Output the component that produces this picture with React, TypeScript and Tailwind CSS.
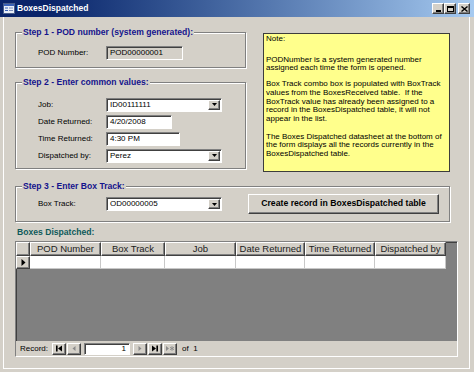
import React from "react";

const FONT = "font-['Liberation_Sans',Arial,sans-serif]";

// raised / sunken win9x style edges
const RAISED = "border border-t-white border-l-white border-b-[#404040] border-r-[#404040] shadow-[inset_-1px_-1px_0_#808080]";
const SUNKEN = "border border-t-[#808080] border-l-[#808080] border-b-white border-r-white shadow-[inset_1px_1px_0_#404040]";

function GroupBox({ title, className, children }: { title: string; className?: string; children?: React.ReactNode }) {
    return (
        <div className={`relative border border-[#808080] shadow-[1px_1px_0_#fff,inset_1px_1px_0_#fff] ${className ?? ""}`}>
            <span className="absolute left-[6px] top-[-6px] px-[1px] bg-[#d4d0c8] text-[8.6px] leading-[11px] font-bold text-[#14148c] whitespace-nowrap">
                {title}
            </span>
            {children}
        </div>
    );
}

function DropArrow() {
    return (
        <div className={`w-[12px] h-full bg-[#d4d0c8] ${RAISED} flex items-center justify-center`}>
            <svg width="5" height="3" viewBox="0 0 5 3">
                <polygon points="0,0 5,0 2.5,3" fill="#000" />
            </svg>
        </div>
    );
}

function Field({ value, width, combo, disabled }: { value: string; width: string; combo?: boolean; disabled?: boolean }) {
    return (
        <div className={`${width} h-[14px] ${SUNKEN} ${disabled ? "bg-[#d4d0c8]" : "bg-white"} flex items-stretch p-[1px]`}>
            <span className="flex-1 pl-[2px] text-[8px] leading-[10px] text-black whitespace-nowrap overflow-hidden">{value}</span>
            {combo && <DropArrow />}
        </div>
    );
}

function FieldRow({ label, children }: { label: string; children: React.ReactNode }) {
    return (
        <div className="flex items-center h-[15px]">
            <span className="w-[68px] text-[8px] text-black whitespace-nowrap">{label}</span>
            {children}
        </div>
    );
}

function NavButton({ kind }: { kind: "first" | "prev" | "next" | "last" | "new" }) {
    const on = "#000";
    const off = "#8a8a8a";
    return (
        <div className={`w-[14px] h-[12px] bg-[#d4d0c8] ${RAISED} flex items-center justify-center`}>
            <svg width="10" height="7" viewBox="0 0 10 7">
                {kind === "first" && (
                    <>
                        <rect x="2" y="0.5" width="1.6" height="6" fill={on} />
                        <polygon points="8,0.5 8,6.5 4,3.5" fill={on} />
                    </>
                )}
                {kind === "prev" && <polygon points="6.5,1 6.5,6 3.5,3.5" fill={off} />}
                {kind === "next" && <polygon points="3.5,1 3.5,6 6.5,3.5" fill={off} />}
                {kind === "last" && (
                    <>
                        <polygon points="2,0.5 2,6.5 6,3.5" fill={on} />
                        <rect x="6.4" y="0.5" width="1.6" height="6" fill={on} />
                    </>
                )}
                {kind === "new" && (
                    <>
                        <polygon points="1,1 1,6 4,3.5" fill={off} />
                        <path d="M7 1.2v4.6M5 2.3l4 2.4M9 2.3l-4 2.4" stroke={off} strokeWidth="0.9" />
                    </>
                )}
            </svg>
        </div>
    );
}

const columns = [
    { name: "POD Number", w: "w-[71px]" },
    { name: "Box Track", w: "w-[64px]" },
    { name: "Job", w: "w-[71px]" },
    { name: "Date Returned", w: "w-[69px]" },
    { name: "Time Returned", w: "w-[70px]" },
    { name: "Dispatched by", w: "w-[71px]" },
];

export default function App() {
    return (
        <div className={`w-[474px] h-[372px] bg-[#d4d0c8] overflow-hidden ${FONT}`}>
            {/* Title bar */}
            <div className="h-[17px] bg-linear-to-r from-[#0a246a] from-10% to-[#a6caf0] flex items-center pl-[3px] pr-[4px]">
                <svg width="12" height="11" viewBox="0 0 12 11" className="mr-[2px]">
                    <rect x="0.5" y="0.5" width="11" height="10" fill="#e8eef8" stroke="#4a5e8c" />
                    <rect x="1" y="1" width="10" height="2" fill="#3a62b8" />
                    <rect x="2" y="4.5" width="3" height="1" fill="#3a62b8" />
                    <rect x="6" y="4.5" width="4" height="1" fill="#7a8cb8" />
                    <rect x="2" y="7" width="3" height="1" fill="#3a62b8" />
                    <rect x="6" y="7" width="4" height="1" fill="#7a8cb8" />
                </svg>
                <span className="text-white font-bold text-[8.5px] leading-[11px]">BoxesDispatched</span>
                <div className="ml-auto flex items-center">
                    <div className={`w-[12px] h-[11px] bg-[#d4d0c8] ${RAISED} flex items-end justify-center pb-[1px]`}>
                        <div className="w-[5px] h-[2px] bg-black" />
                    </div>
                    <div className={`w-[12px] h-[11px] bg-[#d4d0c8] ${RAISED} flex items-center justify-center`}>
                        <div className="w-[7px] h-[6px] border border-black border-t-2" />
                    </div>
                    <div className={`ml-[2px] w-[12px] h-[11px] bg-[#d4d0c8] ${RAISED} flex items-center justify-center`}>
                        <svg width="7" height="6" viewBox="0 0 7 6">
                            <path d="M0.5 0.5L6.5 5.5M6.5 0.5L0.5 5.5" stroke="#000" strokeWidth="1.4" />
                        </svg>
                    </div>
                </div>
            </div>

            {/* Form body */}
            <div className="ml-[3px] w-[467px] h-[352px] border-l border-r border-b border-white pl-[11px] pt-[15px]">
                <div className="flex items-start h-[140px]">
                    <div className="w-[231px] flex flex-col">
                        <GroupBox title="Step 1 - POD number (system generated):" className="h-[36px] pl-[22px] pt-[12px]">
                            <FieldRow label="POD Number:">
                                <Field value="POD00000001" width="w-[77px]" disabled />
                            </FieldRow>
                        </GroupBox>
                        <GroupBox title="Step 2 - Enter common values:" className="mt-[14px] h-[87px] pl-[22px] pt-[14px] flex flex-col gap-[2px]">
                            <FieldRow label="Job:">
                                <Field value="ID00111111" width="w-[116px]" combo />
                            </FieldRow>
                            <FieldRow label="Date Returned:">
                                <Field value="4/20/2008" width="w-[66px]" />
                            </FieldRow>
                            <FieldRow label="Time Returned:">
                                <Field value="4:30 PM" width="w-[74px]" />
                            </FieldRow>
                            <FieldRow label="Dispatched by:">
                                <Field value="Perez" width="w-[116px]" combo />
                            </FieldRow>
                        </GroupBox>
                    </div>

                    {/* Note */}
                    <div className="ml-[17px] mt-[1px] w-[187px] h-[139px] bg-[#ffff8c] border border-[#3c3c3c] pl-[2px] pt-[1px] text-[8px] leading-[8.7px] text-black">
                        <p>Note:</p>
                        <p className="mt-[12px]">
                            PODNumber is a system generated number<br />assigned each time the form is opened.
                        </p>
                        <p className="mt-[7px]">
                            Box Track combo box is populated with BoxTrack<br />
                            values from the BoxesReceived table.&nbsp; If the<br />
                            BoxTrack value has already been assigned to a<br />
                            record in the BoxesDispatched table, it will not<br />
                            appear in the list.
                        </p>
                        <p className="mt-[9px]">
                            The Boxes Dispatched datasheet at the bottom of<br />
                            the form displays all the records currently in the<br />
                            BoxesDispatched table.
                        </p>
                    </div>
                </div>

                <GroupBox title="Step 3 - Enter Box Track:" className="mt-[14px] w-[435px] h-[36px] pl-[22px] flex items-center">
                    <FieldRow label="Box Track:">
                        <Field value="OD00000005" width="w-[116px]" combo />
                    </FieldRow>
                    <button className={`ml-[26px] w-[191px] h-[20px] bg-[#d4d0c8] ${RAISED} text-[8.7px] font-bold text-black`}>
                        Create record in BoxesDispatched table
                    </button>
                </GroupBox>

                <div className="mt-[5px] ml-[2px] text-[8.6px] leading-[11px] font-bold text-[#0e5a5a]">Boxes Dispatched:</div>

                {/* Datasheet */}
                <div className={`mt-[3px] w-[443px] h-[116px] ${SUNKEN} bg-[#808080] flex flex-col`}>
                    <div className="flex h-[14px]">
                        <div className={`w-[14px] bg-[#d4d0c8] ${RAISED}`} />
                        {columns.map((c) => (
                            <div
                                key={c.name}
                                className={`${c.w} bg-[#d4d0c8] ${RAISED} text-[9.5px] leading-[12px] text-center text-[#202020] whitespace-nowrap overflow-hidden`}
                            >
                                {c.name}
                            </div>
                        ))}
                    </div>
                    <div className="flex h-[13px]">
                        <div className={`w-[14px] bg-[#d4d0c8] ${RAISED} flex items-center justify-center`}>
                            <svg width="5" height="7" viewBox="0 0 5 7">
                                <polygon points="0.5,0 4.5,3.5 0.5,7" fill="#000" />
                            </svg>
                        </div>
                        {columns.map((c) => (
                            <div key={c.name} className={`${c.w} bg-white border-r border-b border-[#c8c8c8]`} />
                        ))}
                    </div>
                    <div className="flex-1" />
                    <div className="h-[15px] bg-[#d4d0c8] flex items-center pl-[4px] text-[8px] text-black">
                        <span className="mr-[4px]">Record:</span>
                        <NavButton kind="first" />
                        <div className="ml-[1px]"><NavButton kind="prev" /></div>
                        <div className={`ml-[3px] w-[46px] h-[12px] bg-white ${SUNKEN} text-right pr-[3px] text-[8px] leading-[10px]`}>1</div>
                        <div className="ml-[3px]"><NavButton kind="next" /></div>
                        <div className="ml-[1px]"><NavButton kind="last" /></div>
                        <div className="ml-[1px]"><NavButton kind="new" /></div>
                        <span className="ml-[5px]">of&nbsp;&nbsp;1</span>
                    </div>
                </div>
            </div>
        </div>
    );
}
